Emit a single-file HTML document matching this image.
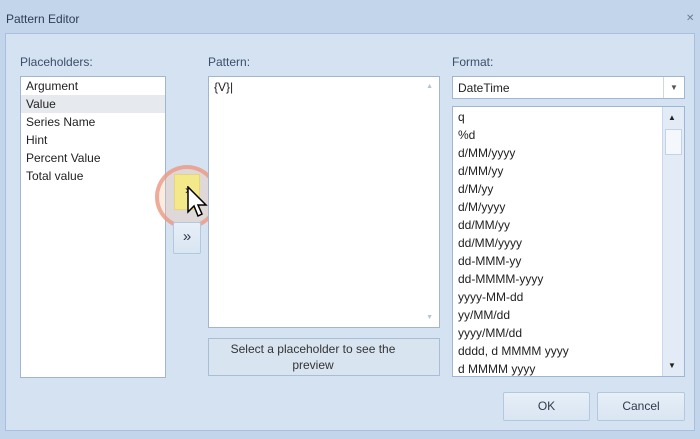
<!DOCTYPE html>
<html><head><style>
*{margin:0;padding:0;box-sizing:border-box}
body{width:700px;height:439px;background:#c3d5ea;font-family:"Liberation Sans",sans-serif;font-size:12px;color:#222;position:relative;overflow:hidden}
.a{position:absolute}
.panel{left:5px;top:33px;width:690px;height:398px;background:#d4e2f2;border:1px solid #a9c0dc}
.lbl{color:#3c4e68;font-size:12px}
.box{background:#fff;border:1px solid #9fb5d2}
.item{position:absolute;left:5px;height:18px;line-height:18px;white-space:nowrap}
.sb{position:absolute;right:0;top:0;bottom:0;width:22px;background:#e3ecf6;border-left:1px solid #c9d8ea}
.btn{background:linear-gradient(#e7eff8,#d9e5f2);border:1px solid #b3c7df;border-radius:2px;text-align:center;color:#2e3a4c}
</style></head><body>
<div class="a" style="left:6px;top:12px;color:#2d3d55">Pattern Editor</div>
<div class="a" style="left:686px;top:13px;color:#6a7a90;font-size:10px">✕</div>
<div class="a panel"></div>
<div class="a lbl" style="left:20px;top:55px">Placeholders:</div>
<div class="a lbl" style="left:208px;top:55px">Pattern:</div>
<div class="a lbl" style="left:452px;top:55px">Format:</div>

<div class="a box" style="left:20px;top:76px;width:146px;height:302px">
<div class="a" style="left:0;top:18px;width:144px;height:18px;background:#e6e9ee"></div>
<div class="item" style="top:0">Argument</div>
<div class="item" style="top:18px">Value</div>
<div class="item" style="top:36px">Series Name</div>
<div class="item" style="top:54px">Hint</div>
<div class="item" style="top:72px">Percent Value</div>
<div class="item" style="top:90px">Total value</div>
</div>

<div class="a" style="left:155px;top:165px;width:64px;height:64px;border-radius:50%;border:4px solid rgba(235,150,130,.75);background:rgba(240,200,170,.35)"></div>
<div class="a" style="left:174px;top:174px;width:26px;height:36px;background:#f3e98a;border:1px solid #e6d67a;text-align:center;line-height:30px">›</div>
<div class="a btn" style="left:173px;top:222px;width:28px;height:32px;line-height:28px;font-size:15px">»</div>
<svg class="a" style="left:186px;top:186px" width="24" height="34" viewBox="0 0 24 34"><path d="M2 1 L2 26 L8 20 L12 30 L16 28 L12 19 L20 19 Z" fill="#fff" stroke="#000" stroke-width="1.5"/></svg>

<div class="a box" style="left:208px;top:76px;width:232px;height:252px">
<div class="item" style="top:1px">{V}|</div>
<div class="a" style="right:6px;top:6px;font-size:7px;color:#b8c4d2">▲</div>
<div class="a" style="right:6px;bottom:6px;font-size:7px;color:#b8c4d2">▼</div>
</div>
<div class="a" style="left:208px;top:338px;width:232px;height:38px;background:#d9e4f1;border:1px solid #a9bdd7;text-align:center;line-height:16px;padding-top:2px;color:#333;padding-right:22px">Select a placeholder to see the preview</div>

<div class="a box" style="left:452px;top:76px;width:233px;height:23px"><div class="item" style="top:2px">DateTime</div><div class="a" style="right:0;top:0;width:21px;height:21px;border-left:1px solid #c9d8ea;text-align:center;font-size:8px;line-height:21px;color:#555">▼</div></div>
<div class="a box" style="left:452px;top:106px;width:233px;height:271px">
<div class="item" style="top:1px">q</div>
<div class="item" style="top:19px">%d</div>
<div class="item" style="top:37px">d/MM/yyyy</div>
<div class="item" style="top:55px">d/MM/yy</div>
<div class="item" style="top:73px">d/M/yy</div>
<div class="item" style="top:91px">d/M/yyyy</div>
<div class="item" style="top:109px">dd/MM/yy</div>
<div class="item" style="top:127px">dd/MM/yyyy</div>
<div class="item" style="top:145px">dd-MMM-yy</div>
<div class="item" style="top:163px">dd-MMMM-yyyy</div>
<div class="item" style="top:181px">yyyy-MM-dd</div>
<div class="item" style="top:199px">yy/MM/dd</div>
<div class="item" style="top:217px">yyyy/MM/dd</div>
<div class="item" style="top:235px">dddd, d MMMM yyyy</div>
<div class="item" style="top:253px">d MMMM yyyy</div>
<div class="sb"><div class="a" style="left:5px;top:6px;font-size:8px">▲</div><div class="a" style="left:2px;top:22px;width:17px;height:26px;background:#f4f7fb;border:1px solid #c3d2e5"></div><div class="a" style="left:5px;bottom:6px;font-size:8px">▼</div></div>
</div>

<div class="a btn" style="left:503px;top:392px;width:87px;height:29px;line-height:27px">OK</div>
<div class="a btn" style="left:597px;top:392px;width:88px;height:29px;line-height:27px">Cancel</div>
</body></html>
